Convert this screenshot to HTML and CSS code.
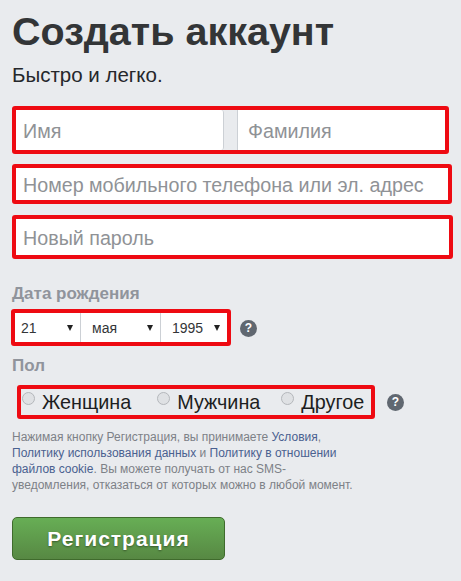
FILE: index.html
```html
<!DOCTYPE html>
<html lang="ru">
<head>
<meta charset="UTF-8">
<meta name="viewport" content="width=device-width, initial-scale=1.0">
<title>Создать аккаунт</title>
<link rel="stylesheet" href="styles.css">
</head>
<body>

<h1 class="title">Создать аккаунт</h1>
<p class="subtitle">Быстро и легко.</p>

<form class="regForm">
    <!-- Имя и фамилия -->
    <div class="redBox nameBox">
        <div class="field nameField">Имя</div>
        <div class="field nameField">Фамилия</div>
    </div>
    <div class="redBox phoneBox">
        <div class="field">Номер мобильного телефона или эл. адрес</div>
    </div>
    <div class="redBox passBox">
        <div class="field">Новый пароль</div>
    </div>

    <div class="label birthLabel">Дата рождения</div>
    <div class="row">
        <div class="redBox dateBox">
            <div class="dateSelect daySelect"><span>21</span><i class="arrow"></i></div>
            <div class="dateSelect monthSelect"><span>мая</span><i class="arrow"></i></div>
            <div class="dateSelect yearSelect"><span>1995</span><i class="arrow"></i></div>
        </div>
        <span class="help dateHelp">?</span>
    </div>

    <div class="label genderLabel">Пол</div>
    <div class="row genderRow">
        <div class="redBox genderBox">
            <div class="radioItem womanItem"><i class="radio"></i>Женщина</div>
            <div class="radioItem manItem"><i class="radio"></i>Мужчина</div>
            <div class="radioItem"><i class="radio"></i>Другое</div>
        </div>
        <span class="help genderHelp">?</span>
    </div>

    <p class="legal">Нажимая кнопку Регистрация, вы принимаете <a href="#">Условия</a>,<br>
    <a href="#">Политику использования данных</a> и <a href="#">Политику в отношении<br>
    файлов cookie</a>. Вы можете получать от нас SMS-<br>
    уведомления, отказаться от которых можно в любой момент.</p>

    <button type="button" class="submitButton">Регистрация</button>
</form>

</body>
</html>
```

FILE: styles.css
```css
/* Allgemeine Stile */
body {
    margin: 0;
    padding: 0 0 0 12px;
    background-color: #e9ebee;
    font-family: "Liberation Sans", Arial, sans-serif;
    color: #1c1e21;
}

.title {
    margin: 0;
    padding-top: 9px;
    font-size: 39.5px;
    line-height: 44px;
    font-weight: bold;
    color: #333537;
}

.subtitle {
    margin: 0;
    padding-top: 10px;
    font-size: 20.5px;
    line-height: 23px;
    color: #25272b;
}

/* Rote Rahmen */
.redBox {
    display: flex;
    box-sizing: border-box;
    border: 4px solid #ee0a12;
    border-radius: 3px;
}

.nameBox {
    width: 437px;
    height: 48px;
    margin-top: 20px;
}

.phoneBox {
    width: 440px;
    height: 40px;
    margin-top: 10px;
}

.passBox {
    width: 441px;
    height: 44px;
    margin-top: 11px;
}

.field {
    flex: 1;
    display: flex;
    align-items: center;
    padding: 3px 0 0 7px;
    background-color: white;
    font-size: 19.7px;
    color: #8f9296;
    white-space: nowrap;
}

.nameBox .field:first-child {
    flex: none;
    width: 200px;
    margin-right: 13px;
    border-right: 1px solid #ccd0d5;
    border-radius: 0 3px 3px 0;
}

.nameBox .field:last-child {
    border-left: 1px solid #ccd0d5;
    padding-left: 10px;
}

/* Geburtsdatum und Geschlecht */
.label {
    font-size: 17px;
    line-height: 20px;
    font-weight: bold;
    color: #90949c;
}

.birthLabel {
    margin-top: 25px;
}

.genderLabel {
    margin-top: 10px;
}

.row {
    display: flex;
    align-items: center;
}

.dateBox {
    width: 220px;
    height: 37px;
    margin-top: 5px;
    margin-left: -1px;
}

.dateSelect {
    display: flex;
    align-items: center;
    justify-content: space-between;
    box-sizing: border-box;
    padding: 0 7px 0 6px;
    background-color: white;
    border-right: 1px solid #ccd0d5;
    font-size: 14px;
    color: #333537;
}

.daySelect {
    width: 66px;
}

.monthSelect {
    width: 80px;
    padding-left: 11px;
}

.yearSelect {
    flex: 1;
    padding-left: 11px;
    border-right: none;
}

.arrow {
    width: 0;
    height: 0;
    border-left: 3px solid transparent;
    border-right: 3px solid transparent;
    border-top: 6px solid #222;
}

.help {
    width: 17px;
    height: 17px;
    border-radius: 50%;
    background-color: #606770;
    color: white;
    font-size: 12px;
    line-height: 17px;
    font-weight: bold;
    text-align: center;
}

.dateHelp {
    margin: 6px 0 0 9px;
}

.genderRow {
    margin-top: 9px;
}

.genderBox {
    align-items: center;
    width: 358px;
    height: 34px;
    margin-left: 5px;
    padding-left: 1px;
}

.radioItem {
    display: flex;
    align-items: center;
    font-size: 19.8px;
    color: #1c1e21;
    white-space: nowrap;
}

.womanItem {
    margin-right: 26px;
}

.manItem {
    margin-right: 21px;
}

.radio {
    width: 11px;
    height: 11px;
    margin: -8px 7px 0 0;
    border: 1px solid #b4b7bb;
    border-radius: 50%;
    background-color: #dfe1e4;
}

.genderHelp {
    margin-left: 12px;
}

/* Rechtlicher Hinweis */
.legal {
    margin: 10px 0 0;
    font-size: 12px;
    line-height: 16px;
    color: #7d8187;
    white-space: nowrap;
}

.legal a {
    color: #4a6190;
    text-decoration: none;
}

.submitButton {
    display: block;
    width: 213px;
    height: 43px;
    margin-top: 24px;
    border: 1px solid #3f6b2c;
    border-radius: 5px;
    background: linear-gradient(#67ae55, #578843);
    color: white;
    font-family: inherit;
    font-size: 21px;
    font-weight: bold;
    letter-spacing: 1px;
    text-shadow: 0 1px 2px rgba(0, 0, 0, 0.4);
}
```
